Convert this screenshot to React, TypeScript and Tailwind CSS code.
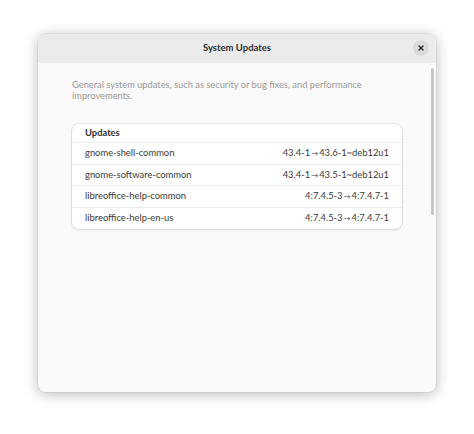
import { X } from "lucide-react";

const updates = [
  { name: "gnome-shell-common", from: "43.4-1", to: "43.6-1~deb12u1" },
  { name: "gnome-software-common", from: "43.4-1", to: "43.5-1~deb12u1" },
  { name: "libreoffice-help-common", from: "4:7.4.5-3", to: "4:7.4.7-1" },
  { name: "libreoffice-help-en-us", from: "4:7.4.5-3", to: "4:7.4.7-1" },
];

export default function App() {
  return (
    <div
      className="h-[434px] w-[474px] bg-white pl-[38px] pt-[34px]"
      style={{ fontFamily: 'Lato, "Noto Sans", sans-serif' }}
    >
      <div className="flex h-[358px] w-[398px] flex-col overflow-hidden rounded-[8px] bg-[#fafafa] shadow-[0_2px_14px_rgba(0,0,0,0.28),0_0_0_1px_rgba(0,0,0,0.04)]">
        <div className="relative flex h-[29px] shrink-0 items-center justify-center bg-[#ebebeb]">
          <span className="text-[9.5px] font-bold text-[#2e2e2e]">System Updates</span>
          <div className="absolute right-[7px] top-[6px] flex h-[16px] w-[16px] items-center justify-center rounded-full bg-[#dcdcdc]">
            <X className="h-[8px] w-[8px] text-[#2e2e2e]" strokeWidth={4} />
          </div>
        </div>
        <div className="relative flex-1">
          <div className="px-[34px] pt-[16px]">
            <p className="text-[9.3px] leading-[11px] text-[#999999]">
              General system updates, such as security or bug fixes, and performance improvements.
            </p>
            <div className="mt-[23px] overflow-hidden rounded-[7px] bg-white shadow-[0_0_0_1px_rgba(0,0,0,0.07),0_1px_3px_rgba(0,0,0,0.1)]">
              <div className="flex h-[19px] items-center border-b border-[#ececec] px-[13px] text-[9.4px] font-bold text-[#2e2e2e]">
                Updates
              </div>
              {updates.map((u, i) => (
                <div
                  key={u.name}
                  className={`flex h-[21.5px] items-center justify-between px-[13px] text-[9.4px] text-[#3a3a3a] ${i < updates.length - 1 ? "border-b border-[#ececec]" : ""}`}
                >
                  <span>{u.name}</span>
                  <span>
                    {u.from}
                    <span className="mx-[1px] text-[7px]">→</span>
                    {u.to}
                  </span>
                </div>
              ))}
            </div>
          </div>
          <div className="absolute right-[2px] top-[5px] h-[147px] w-[3px] rounded-full bg-[#c8c8c8]" />
        </div>
      </div>
    </div>
  );
}
